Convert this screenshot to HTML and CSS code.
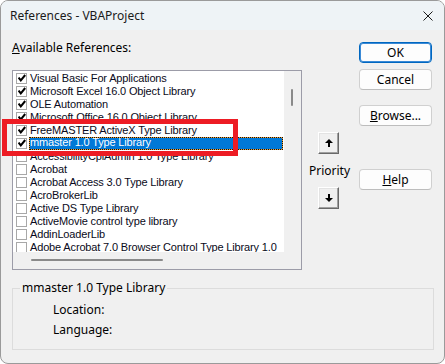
FILE: index.html
```html
<!DOCTYPE html>
<html lang="en">
<head>
    <meta charset="UTF-8">
    <title>References - VBAProject</title>
    <link rel="stylesheet" href="styles.css">
</head>
<body>
    <div class="window">
        <div class="titlebar">
            <span class="title">References - VBAProject</span>
            <svg class="close" width="10" height="10" viewBox="0 0 10 10">
                <path d="M0.5 0.5 L9.5 9.5 M9.5 0.5 L0.5 9.5" stroke="#1a1a1a" stroke-width="1"/>
            </svg>
        </div>

        <div class="content">
            <div class="left-col">
                <div class="caption"><u>A</u>vailable References:</div>
                <div class="listbox">
                    <div class="list">
                        <div class="row"><span class="check on"></span><span class="text">Visual Basic For Applications</span></div>
                        <div class="row"><span class="check on"></span><span class="text">Microsoft Excel 16.0 Object Library</span></div>
                        <div class="row"><span class="check on"></span><span class="text">OLE Automation</span></div>
                        <div class="row"><span class="check on"></span><span class="text">Microsoft Office 16.0 Object Library</span></div>
                        <div class="row"><span class="check on"></span><span class="text">FreeMASTER ActiveX Type Library</span></div>
                        <div class="row selected"><span class="check on"></span><span class="text"><span class="focus">mmaster 1.0 Type Library</span></span></div>
                        <div class="row"><span class="check"></span><span class="text">AccessibilityCplAdmin 1.0 Type Library</span></div>
                        <div class="row"><span class="check"></span><span class="text">Acrobat</span></div>
                        <div class="row"><span class="check"></span><span class="text">Acrobat Access 3.0 Type Library</span></div>
                        <div class="row"><span class="check"></span><span class="text">AcroBrokerLib</span></div>
                        <div class="row"><span class="check"></span><span class="text">Active DS Type Library</span></div>
                        <div class="row"><span class="check"></span><span class="text">ActiveMovie control type library</span></div>
                        <div class="row"><span class="check"></span><span class="text">AddinLoaderLib</span></div>
                        <div class="row"><span class="check"></span><span class="text">Adobe Acrobat 7.0 Browser Control Type Library 1.0</span></div>
                    </div>
                    <div class="vscroll"><span class="thumb"></span></div>
                    <div class="hscroll"><span class="thumb"></span></div>
                    <div class="corner"></div>
                </div>
            </div>

            <div class="priority">
                <button class="arrow">
                    <svg width="8" height="8" viewBox="0 0 8 8"><path d="M4 0 L8 4 L5 4 L5 8 L3 8 L3 4 L0 4 Z" fill="#000"/></svg>
                </button>
                <div class="priority-label">Priority</div>
                <button class="arrow">
                    <svg width="8" height="8" viewBox="0 0 8 8"><path d="M4 8 L8 4 L5 4 L5 0 L3 0 L3 4 L0 4 Z" fill="#000"/></svg>
                </button>
            </div>

            <div class="buttons">
                <button class="btn default">OK</button>
                <button class="btn cancel">Cancel</button>
                <button class="btn browse"><u>B</u>rowse...</button>
                <button class="btn help"><u>H</u>elp</button>
            </div>
        </div>

        <fieldset class="details">
            <legend>mmaster 1.0 Type Library</legend>
            <div class="detail-line">Location:</div>
            <div class="detail-line">Language:</div>
        </fieldset>

        <div class="highlight-box"></div>
    </div>
</body>
</html>
```

FILE: styles.css
```css
* {
    margin: 0;
    padding: 0;
    box-sizing: border-box;
}

body {
    background: #ffffff;
    font-family: 'Noto Sans', 'Open Sans', sans-serif;
    font-size: 12px;
    color: #000;
}

.window {
    position: relative;
    width: 445px;
    height: 364px;
    background: #f0f0f0;
    border: 1px solid #9a9a9a;
    border-radius: 8px;
    overflow: hidden;
}

.titlebar {
    height: 29px;
    background: #eef3f6;
    display: flex;
    align-items: center;
    justify-content: space-between;
    padding: 0 11px 0 9px;
}

.title {
    font-size: 12px;
    color: #1a1a1a;
}

.content {
    display: flex;
    padding: 0 12px 0 11px;
}

.left-col {
    width: 290px;
}

.caption {
    margin-top: 10px;
    line-height: 16px;
    height: 16px;
}

.listbox {
    margin-top: 14px;
    width: 290px;
    height: 200px;
    border: 1px solid #9c9ca8;
    display: grid;
    grid-template-columns: 271px 17px;
    grid-template-rows: 181px 17px;
}

.list {
    background: #fff;
    overflow: hidden;
    padding-top: 1px;
    font-family: 'Liberation Sans', Arial, sans-serif;
    font-size: 11px;
    letter-spacing: -0.15px;
    color: #0a0a20;
}

.row {
    display: flex;
    align-items: center;
    height: 13px;
    padding-left: 3px;
    white-space: nowrap;
}

.check {
    flex: none;
    width: 11px;
    height: 11px;
    border: 1px solid #a8a8a8;
    background: #fff;
    margin-right: 2px;
    position: relative;
}

.check.on::after {
    content: "";
    position: absolute;
    left: 1px;
    top: 0px;
    width: 8px;
    height: 8px;
    background: url("data:image/svg+xml,%3Csvg xmlns='http://www.w3.org/2000/svg' width='8' height='8' viewBox='0 0 8 8'%3E%3Cpath d='M0.6 3.6 L2.8 6.4 L7.2 1' fill='none' stroke='%23000' stroke-width='2'/%3E%3C/svg%3E") no-repeat;
}

.text {
    padding: 0 1px;
    line-height: 13px;
}

.row.selected .text {
    flex: 1;
    margin-right: 1px;
    padding: 0;
}

.focus {
    display: block;
    height: 13px;
    line-height: 11px;
    padding: 0 1px;
    color: #fff;
    background: #0078d7;
    outline: 1px dotted #111;
    outline-offset: -1px;
    box-shadow: inset 0 0 0 1px #f0a030;
}

.vscroll, .hscroll, .corner {
    background: #f0f0f0;
    position: relative;
}

.vscroll .thumb {
    position: absolute;
    left: 7px;
    top: 18px;
    width: 2px;
    height: 17px;
    background: #8a8a8a;
    border-radius: 1px;
}

.hscroll .thumb {
    position: absolute;
    left: 18px;
    top: 7px;
    width: 132px;
    height: 2px;
    background: #8a8a8a;
    border-radius: 1px;
}

.priority {
    width: 36px;
    margin-left: 7px;
    display: flex;
    flex-direction: column;
}

.arrow {
    margin-top: 102px;
    margin-left: 9px;
    width: 21px;
    height: 22px;
    background: #f0f0f0;
    border: 1px solid;
    border-color: #fff #696969 #696969 #fff;
    box-shadow: inset -1px -1px 0 #a0a0a0, inset 1px 1px 0 #e3e3e3;
    display: flex;
    align-items: center;
    justify-content: center;
}

.priority-label {
    margin-top: 9px;
    line-height: 16px;
    height: 16px;
}

.priority-label + .arrow {
    margin-top: 8px;
}

.buttons {
    margin-left: 14px;
    display: flex;
    flex-direction: column;
}

.btn {
    width: 73px;
    height: 21px;
    background: #fdfdfd;
    border: 1px solid #d0d0d0;
    border-bottom-color: #bdbdbd;
    border-radius: 4px;
    font-family: 'Noto Sans', 'Open Sans', sans-serif;
    font-size: 12px;
    line-height: 18px;
    color: #000;
}

.btn.default {
    margin-top: 12px;
    border: 1px solid #0067c0;
    box-shadow: inset 0 0 0 1px #3b8ad6;
}

.btn.cancel {
    margin-top: 6px;
}

.btn.browse {
    margin-top: 15px;
}

.btn.help {
    margin-top: 43px;
}

.details {
    margin: 10px 10px 0 11px;
    height: 70px;
    border: 1px solid #dcdcdc;
    padding: 6px 0 0 0;
}

.details legend {
    margin-left: 7px;
    padding: 0 2px;
    line-height: 16px;
}

.detail-line {
    padding-left: 40px;
    line-height: 16px;
    height: 20px;
}

.highlight-box {
    position: absolute;
    left: 1px;
    top: 118px;
    width: 236px;
    height: 37px;
    border: 5px solid #ed1c24;
}
```
